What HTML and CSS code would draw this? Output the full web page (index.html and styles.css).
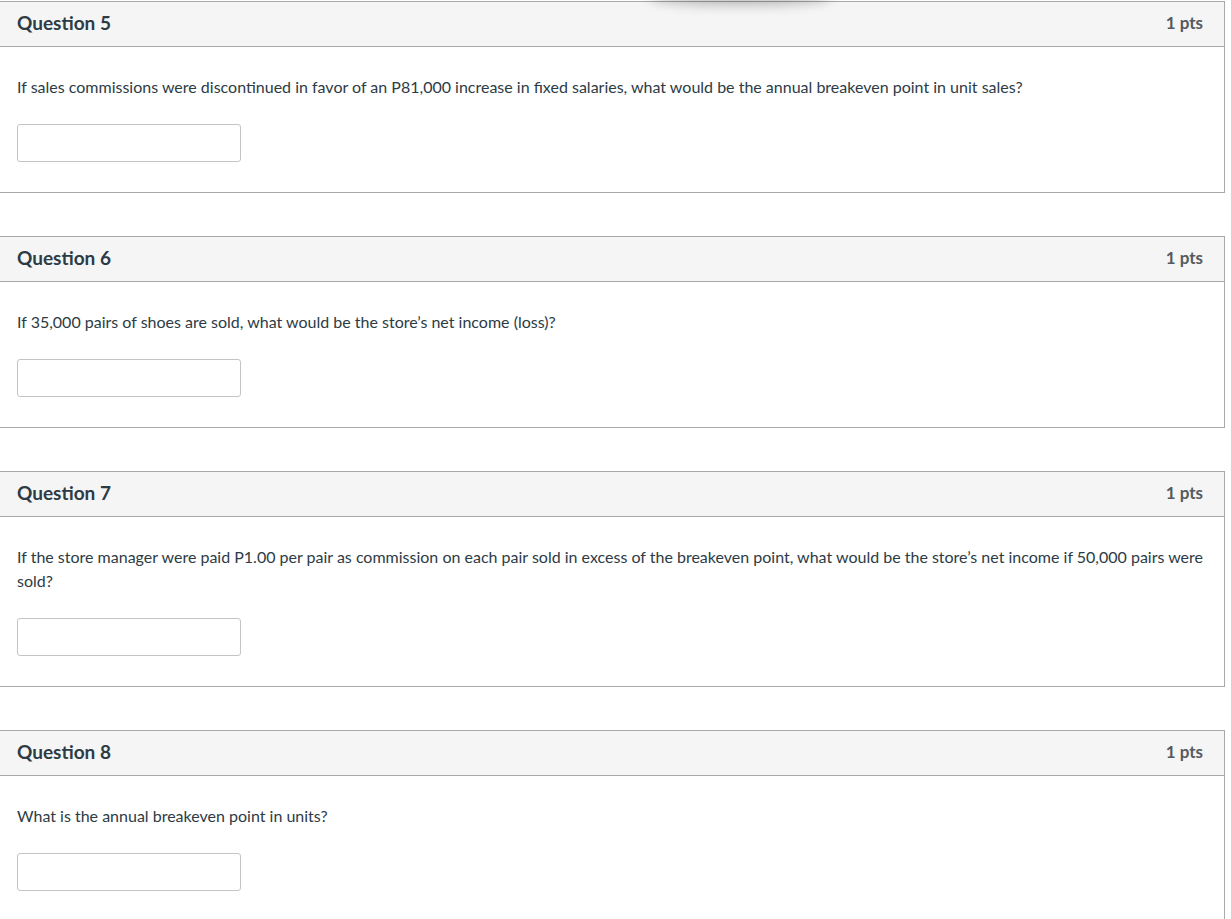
FILE: index.html
```html
<!DOCTYPE html>
<html>
<head>
<meta charset="utf-8">
<link rel="stylesheet" href="styles.css">
</head>
<body>
<div class="top-shadow"></div>
<main class="quiz">
  <section class="question">
    <header class="q-header"><h2 class="q-title">Question 5</h2><span class="q-pts">1 pts</span></header>
    <div class="q-body">
      <p class="q-text">If sales commissions were discontinued in favor of an P81,000 increase in fixed salaries, what would be the annual breakeven point in unit sales?</p>
      <input class="q-input" type="text">
    </div>
  </section>
  <section class="question">
    <header class="q-header"><h2 class="q-title">Question 6</h2><span class="q-pts">1 pts</span></header>
    <div class="q-body">
      <p class="q-text">If 35,000 pairs of shoes are sold, what would be the store’s net income (loss)?</p>
      <input class="q-input" type="text">
    </div>
  </section>
  <section class="question">
    <header class="q-header"><h2 class="q-title">Question 7</h2><span class="q-pts">1 pts</span></header>
    <div class="q-body">
      <p class="q-text">If the store manager were paid P1.00 per pair as commission on each pair sold in excess of the breakeven point, what would be the store’s net income if 50,000 pairs were sold?</p>
      <input class="q-input" type="text">
    </div>
  </section>
  <section class="question">
    <header class="q-header"><h2 class="q-title">Question 8</h2><span class="q-pts">1 pts</span></header>
    <div class="q-body">
      <p class="q-text">What is the annual breakeven point in units?</p>
      <input class="q-input" type="text">
    </div>
  </section>
</main>
</body>
</html>
```
FILE: styles.css
```css
html, body {
  margin: 0;
  padding: 0;
  background: #ffffff;
}
body {
  font-family: Lato, "Open Sans", sans-serif;
  color: #2d3b45;
  padding-top: 1px;
  overflow: hidden;
}
.top-shadow {
  position: absolute;
  left: 650px;
  top: -12px;
  width: 180px;
  height: 12px;
  border-radius: 50%;
  box-shadow: 0 3px 12px 2px rgba(0,0,0,0.25);
  background: #999;
}
.quiz {
  display: flex;
  flex-direction: column;
  gap: 43px;
  width: 1225px;
}
.question {
  border: 1px solid #a9a9a9;
  border-left: none;
  background: #fff;
}
.q-header {
  display: flex;
  justify-content: space-between;
  align-items: center;
  box-sizing: border-box;
  height: 45px;
  padding: 0 21px 3px 17px;
  background: #f5f5f5;
  border-bottom: 1px solid #a9a9a9;
}
.q-title {
  margin: 0;
  font-size: 19px;
  font-weight: 700;
  color: #2d3b45;
}
.q-pts {
  font-size: 17px;
  font-weight: 700;
  color: #555a5e;
}
.q-body {
  padding: 28px 20px 30px 17px;
  display: flex;
  flex-direction: column;
  align-items: flex-start;
}
.q-text {
  margin: 0 0 25px;
  font-size: 16px;
  line-height: 24px;
  color: #2d3b45;
}
.q-input {
  box-sizing: border-box;
  width: 224px;
  height: 38px;
  margin: 0;
  border: 1px solid #c4c4c4;
  border-radius: 3px;
  background: #fff;
}
```
